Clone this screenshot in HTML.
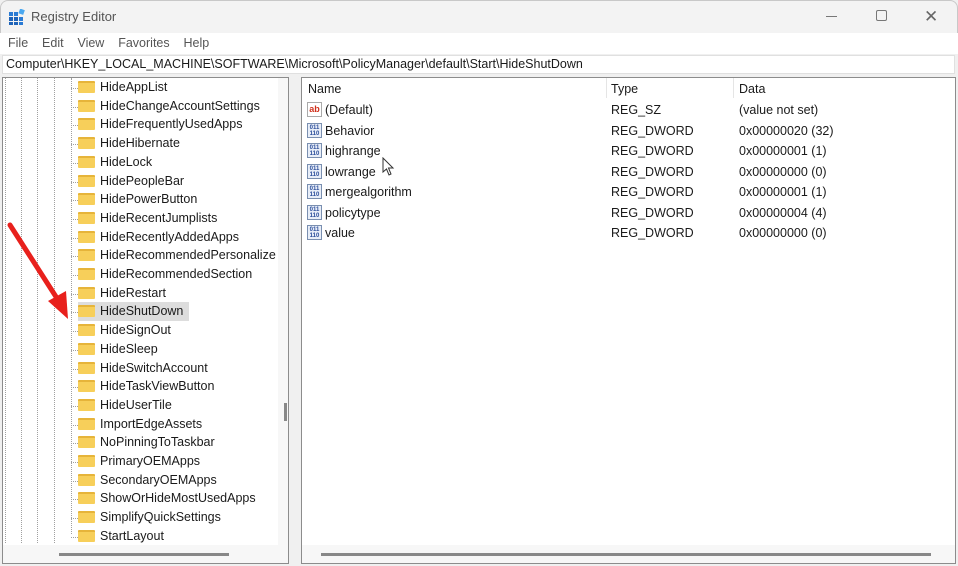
<!DOCTYPE html><html><head><style>
*{margin:0;padding:0;box-sizing:border-box}
body{width:958px;height:566px;background:#f0f0f0;font-family:"Liberation Sans",sans-serif;font-size:12.5px;color:#1a1a1a;position:relative;overflow:hidden}
.abs{position:absolute;white-space:nowrap}
.title{left:0;top:0;width:958px;height:33px;background:#f3f3f3;border-radius:8px 8px 0 0;border:1px solid #c8c8c8;border-bottom:none}
.menu{left:0;top:33px;width:958px;height:21px;background:#fff}
.addr{left:2px;top:55px;width:953px;height:19px;background:#fff;border:1px solid #e0e0e0}
.lp{left:2px;top:77px;width:287px;height:487px;background:#fff;border:1px solid #8c8c8c}
.rp{left:301px;top:77px;width:655px;height:487px;background:#fff;border:1px solid #8c8c8c}
.row{position:absolute;left:78px;height:18px;line-height:18px}
.fold{display:inline-block;width:17px;height:12px;background:#f7cf5a;border-radius:1px;vertical-align:-2px;margin-right:5px;position:relative;border-top:2px solid #e6b43a}
.vl{position:absolute;top:78px;height:465px;border-left:1px dotted #a0a0a0}
.hl{position:absolute;left:71px;width:7px;border-top:1px dotted #a0a0a0}
.ic{position:absolute;width:15px;height:15px;border:1px solid #7a8fb0;background:#e8eef8;font-size:6px;line-height:6px;color:#2a4d9a;font-weight:bold;text-align:center;padding-top:1px}
</style></head><body>
<div class="abs title"></div>
<svg class="abs" style="left:9px;top:9px" width="16" height="16"><rect x="0" y="3" width="4" height="4" fill="#2a7bd4"/><rect x="5" y="3" width="4" height="4" fill="#2a7bd4"/><rect x="0" y="8" width="4" height="4" fill="#1e63b8"/><rect x="5" y="8" width="4" height="4" fill="#1e63b8"/><rect x="0" y="13" width="4" height="3" fill="#1e63b8"/><rect x="5" y="13" width="4" height="3" fill="#1e63b8"/><rect x="10" y="8" width="4" height="4" fill="#2a7bd4"/><rect x="10" y="13" width="4" height="3" fill="#2a7bd4"/><rect x="10" y="0" width="5" height="5" fill="#4aa8f0" transform="rotate(20 12 3)"/></svg>
<div class="abs" style="left:31px;top:9px;color:#555;font-size:13px">Registry Editor</div>
<div class="abs" style="left:826px;top:16px;width:11px;border-top:1px solid #777"></div>
<div class="abs" style="left:876px;top:10px;width:11px;height:11px;border:1px solid #777;border-radius:2px"></div>
<div class="abs" style="left:924px;top:7px;font-size:17px;color:#666">✕</div>
<div class="abs menu"></div>
<div class="abs" style="left:8px;top:36px;color:#555;font-size:12.5px">File&nbsp;&nbsp;&nbsp;&nbsp;Edit&nbsp;&nbsp;&nbsp;&nbsp;View&nbsp;&nbsp;&nbsp;&nbsp;Favorites&nbsp;&nbsp;&nbsp;&nbsp;Help</div>
<div class="abs addr"></div>
<div class="abs" style="left:6px;top:57px;font-size:12.5px">Computer\HKEY_LOCAL_MACHINE\SOFTWARE\Microsoft\PolicyManager\default\Start\HideShutDown</div>
<div class="abs lp"></div>
<div class="abs" style="left:278px;top:78px;width:10px;height:467px;background:#f7f7f7"></div>
<div class="abs" style="left:284px;top:403px;width:3px;height:18px;background:#888"></div>
<div class="abs" style="left:3px;top:545px;width:285px;height:18px;background:#f7f7f7"></div>
<div class="abs" style="left:59px;top:553px;width:170px;height:3px;background:#888"></div>
<div class="vl" style="left:5px"></div><div class="vl" style="left:21px"></div><div class="vl" style="left:37px"></div><div class="vl" style="left:54px"></div><div class="vl" style="left:71px;height:456px"></div>
<div class="abs" style="left:78px;top:302px;width:111px;height:19px;background:#ddd"></div>
<div id="tree"></div>
<div class="abs rp"></div>
<div class="abs" style="left:606px;top:78px;height:20px;border-left:1px solid #e5e5e5"></div>
<div class="abs" style="left:733px;top:78px;height:20px;border-left:1px solid #e5e5e5"></div>
<div class="abs" style="left:308px;top:82px">Name</div><div class="abs" style="left:611px;top:82px">Type</div><div class="abs" style="left:739px;top:82px">Data</div>
<div id="vals"></div>
<div class="abs" style="left:302px;top:545px;width:653px;height:18px;background:#f7f7f7"></div>
<div class="abs" style="left:321px;top:553px;width:610px;height:3px;background:#888"></div>
<svg class="abs" style="left:382px;top:157px" width="14" height="20"><path d="M1 1 L1 15 L4.5 12 L7 18 L9 17 L6.5 11 L11 11 Z" fill="#fff" stroke="#333" stroke-width="1"/></svg>
<svg class="abs" style="left:0;top:215px" width="80" height="110"><path d="M10 10 L60 88" stroke="#e8201c" stroke-width="5" stroke-linecap="round"/><path d="M48 86 L68 104 L66 76 Z" fill="#e8201c"/></svg>
<script>
var t=["HideAppList","HideChangeAccountSettings","HideFrequentlyUsedApps","HideHibernate","HideLock","HidePeopleBar","HidePowerButton","HideRecentJumplists","HideRecentlyAddedApps","HideRecommendedPersonalize","HideRecommendedSection","HideRestart","HideShutDown","HideSignOut","HideSleep","HideSwitchAccount","HideTaskViewButton","HideUserTile","ImportEdgeAssets","NoPinningToTaskbar","PrimaryOEMApps","SecondaryOEMApps","ShowOrHideMostUsedApps","SimplifyQuickSettings","StartLayout"];
var h="";t.forEach(function(n,i){var y=78+i*18.7;h+='<div class="hl" style="top:'+(y+10)+'px"></div><div class="row" style="top:'+y+'px"><span class="fold"></span>'+n+'</div>';});
document.getElementById("tree").innerHTML=h;
var v=[["(Default)","REG_SZ","(value not set)",1],["Behavior","REG_DWORD","0x00000020 (32)"],["highrange","REG_DWORD","0x00000001 (1)"],["lowrange","REG_DWORD","0x00000000 (0)"],["mergealgorithm","REG_DWORD","0x00000001 (1)"],["policytype","REG_DWORD","0x00000004 (4)"],["value","REG_DWORD","0x00000000 (0)"]];
h="";v.forEach(function(r,i){var y=103+i*20.5;var ic=r[3]?'<span class="ic" style="left:307px;top:'+(y-1)+'px;color:#d0301c;font-size:9px;line-height:11px;border-color:#aaa;background:#fff">ab</span>':'<span class="ic" style="left:307px;top:'+(y-1)+'px">011<br>110</span>';
h+=ic+'<div class="abs" style="left:325px;top:'+y+'px">'+r[0]+'</div><div class="abs" style="left:611px;top:'+y+'px">'+r[1]+'</div><div class="abs" style="left:739px;top:'+y+'px">'+r[2]+'</div>';});
document.getElementById("vals").innerHTML=h;
</script>
</body></html>
